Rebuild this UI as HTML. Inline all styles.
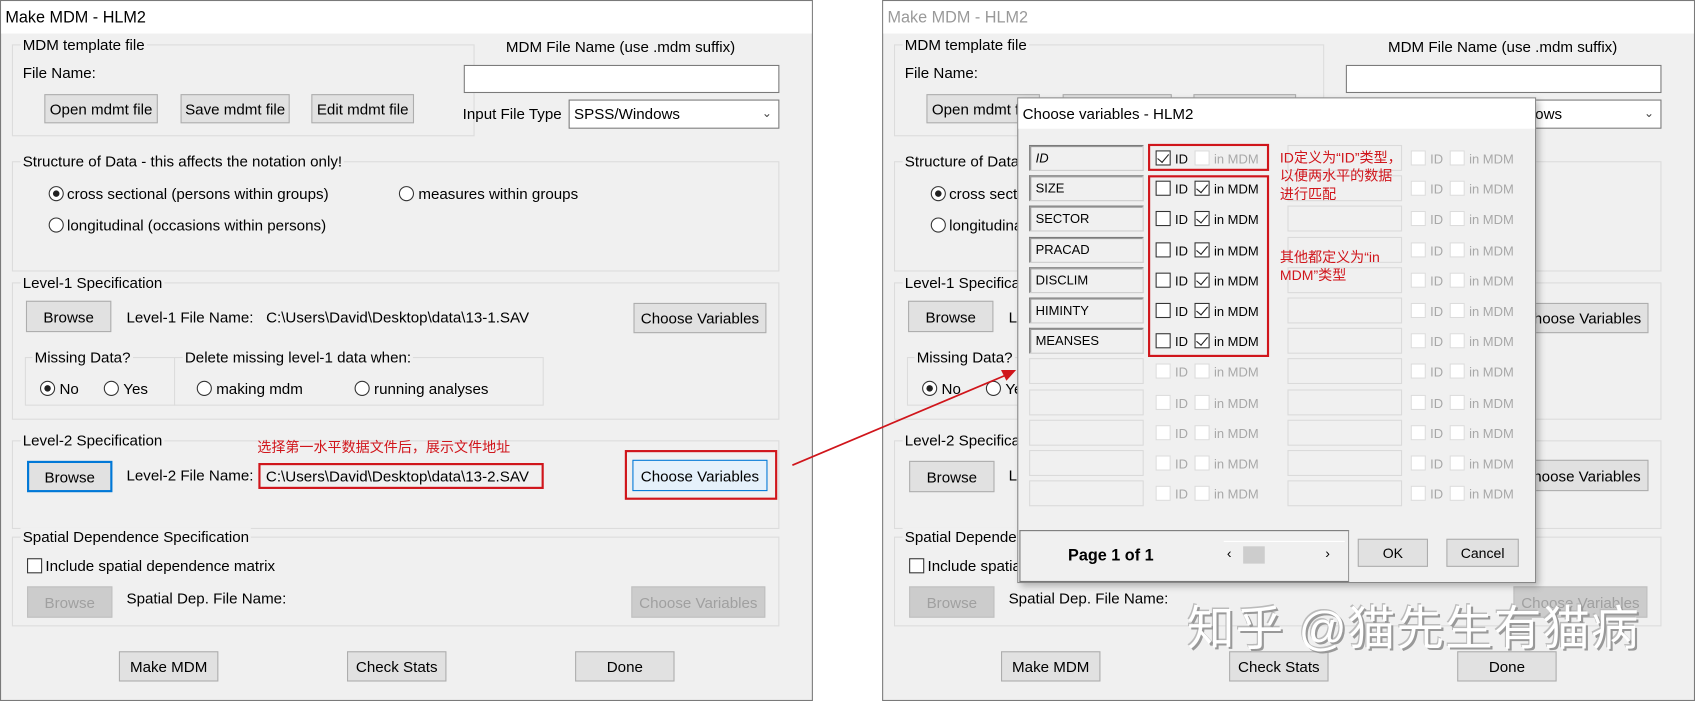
<!DOCTYPE html>
<html><head><meta charset="utf-8"><style>
*{box-sizing:border-box;margin:0;padding:0}
body{width:1695px;height:701px;overflow:hidden;background:#fff;font-family:"Liberation Sans","Noto Sans CJK SC",sans-serif;}
#s{position:absolute;left:0;top:0;width:1568px;height:648px;transform:scale(1.081,1.0818);transform-origin:0 0;}
.w{position:absolute;top:0;width:752px;height:648px;background:#f0f0f0;border:1px solid #7a7a7a;overflow:hidden}
.tb{position:absolute;left:0;top:0;right:0;height:30px;background:#fff}
.tt{position:absolute;left:4px;top:7px;font-size:15px;color:#000;white-space:nowrap}
.a{position:absolute;white-space:nowrap;font-size:14px;line-height:16px;color:#000}
.g{position:absolute;border:1px solid #dcdcdc}
.gl{position:absolute;background:#f0f0f0;padding:0 2px;font-size:14px;line-height:16px;white-space:nowrap}
.b{position:absolute;background:#e1e1e1;border:1px solid #adadad;font-size:14px;display:flex;align-items:center;justify-content:center;white-space:nowrap}
.dis{color:#a0a0a0;background:#cccccc;border-color:#bfbfbf}
.r{position:absolute;width:14px;height:14px;border:1px solid #333;border-radius:50%;background:#fff}
.r.on::after{content:"";position:absolute;left:3px;top:3px;width:6px;height:6px;border-radius:50%;background:#222}
.cb{position:absolute;width:14px;height:14px;border:1px solid #333;background:#fff}
.red{color:#d0151b}
.rb{position:absolute;border:2px solid #d0151b}
.vn{position:absolute;width:106px;height:24px;border:1px solid #7a7a7a;border-right-color:#ccc;border-bottom-color:#ccc;background:#f0f0f0;font-size:12px;line-height:22px;padding-left:5px;box-shadow:inset 1px 1px 0 #999}
.ve{border:1px solid #dadada;box-shadow:none}
.c{position:absolute;width:14px;height:14px;border:1px solid #333;background:#fff}
.cd{border-color:#dcdcdc}
.ck::after{content:"";position:absolute;left:3px;top:0px;width:5px;height:9px;border:solid #222;border-width:0 1.5px 1.5px 0;transform:rotate(40deg)}
.l{position:absolute;font-size:12px;line-height:14px;white-space:nowrap}
.ld{color:#a8a8a8}
</style></head><body><div id="s">

<!-- LEFT WINDOW -->
<div class="w" style="left:0">
<div class="tb"><div class="tt">Make MDM - HLM2</div></div>
<div class="g" style="left:10px;top:40px;width:428px;height:85px"></div><div class="gl" style="left:18px;top:32px">MDM template file</div>
<div class="a" style="left:20px;top:58px">File Name:</div>
<div class="b" style="left:40px;top:86px;width:105px;height:27px">Open mdmt file</div>
<div class="b" style="left:166px;top:86px;width:101px;height:27px">Save mdmt file</div>
<div class="b" style="left:287px;top:86px;width:95px;height:27px">Edit mdmt file</div>
<div class="a" style="left:467px;top:34px">MDM File Name (use .mdm suffix)</div>
<div style="position:absolute;left:428px;top:59px;width:292px;height:26px;background:#fff;border:1px solid #7a7a7a"></div>
<div class="a" style="left:427px;top:96px">Input File Type</div>
<div style="position:absolute;left:525px;top:91px;width:195px;height:27px;background:#fff;border:1px solid #7a7a7a;font-size:14px;line-height:25px;padding-left:4px">SPSS/Windows<span style="position:absolute;right:6px;top:0;font-size:11px;color:#444">&#8964;</span></div>

<div class="g" style="left:10px;top:148px;width:710px;height:102px"></div><div class="gl" style="left:18px;top:140px">Structure of Data - this affects the notation only!</div>
<div class="r on" style="left:44px;top:171px"></div><div class="a" style="left:61px;top:170px">cross sectional (persons within groups)</div>
<div class="r" style="left:368px;top:171px"></div><div class="a" style="left:386px;top:170px">measures within groups</div>
<div class="r" style="left:44px;top:200px"></div><div class="a" style="left:61px;top:199px">longitudinal (occasions within persons)</div>

<div class="g" style="left:10px;top:260px;width:710px;height:127px"></div><div class="gl" style="left:18px;top:252px">Level-1 Specification</div>
<div class="b" style="left:23px;top:277px;width:79px;height:29px">Browse</div>
<div class="a" style="left:116px;top:284px">Level-1 File Name:&nbsp;&nbsp; C:\Users\David\Desktop\data\13-1.SAV</div>
<div class="b" style="left:585px;top:279px;width:123px;height:28px">Choose Variables</div>
<div class="g" style="left:22px;top:329px;width:480px;height:45px"></div>
<div style="position:absolute;left:160px;top:329px;width:1px;height:45px;background:#dcdcdc"></div>
<div class="gl" style="left:29px;top:321px">Missing Data?</div><div class="gl" style="left:168px;top:321px">Delete missing level-1 data when:</div>
<div class="r on" style="left:36px;top:351px"></div><div class="a" style="left:54px;top:350px">No</div>
<div class="r" style="left:95px;top:351px"></div><div class="a" style="left:113px;top:350px">Yes</div>
<div class="r" style="left:181px;top:351px"></div><div class="a" style="left:199px;top:350px">making mdm</div>
<div class="r" style="left:327px;top:351px"></div><div class="a" style="left:345px;top:350px">running analyses</div>

<div class="g" style="left:10px;top:406px;width:710px;height:82px"></div><div class="gl" style="left:18px;top:398px">Level-2 Specification</div>
<div class="a red" style="left:237px;top:405px;font-size:13px">选择第一水平数据文件后，展示文件地址</div>
<div class="b" style="left:24px;top:425px;width:79px;height:29px;border:2px solid #0078d7">Browse</div>
<div class="a" style="left:116px;top:430px">Level-2 File Name:</div>
<div class="rb" style="left:238px;top:427px;width:264px;height:24px"></div>
<div class="a" style="left:245px;top:431px">C:\Users\David\Desktop\data\13-2.SAV</div>
<div class="rb" style="left:577px;top:415px;width:141px;height:46px"></div>
<div class="b" style="left:584px;top:424px;width:125px;height:29px;background:#e5f1fb;border:1px solid #0078d7">Choose Variables</div>

<div class="g" style="left:10px;top:495px;width:710px;height:83px"></div><div class="gl" style="left:18px;top:487px">Spatial Dependence Specification</div>
<div class="cb" style="left:24px;top:515px"></div><div class="a" style="left:41px;top:514px">Include spatial dependence matrix</div>
<div class="b dis" style="left:24px;top:541px;width:79px;height:29px">Browse</div>
<div class="a" style="left:116px;top:544px">Spatial Dep. File Name:</div>
<div class="b dis" style="left:583px;top:541px;width:124px;height:29px">Choose Variables</div>

<div class="b" style="left:109px;top:601px;width:92px;height:28px">Make MDM</div>
<div class="b" style="left:320px;top:601px;width:92px;height:28px">Check Stats</div>
<div class="b" style="left:531px;top:601px;width:92px;height:28px">Done</div>
</div>

<!-- RIGHT WINDOW -->
<div class="w" style="left:816px">
<div class="tb"><div class="tt" style="color:#999">Make MDM - HLM2</div></div>
<div class="g" style="left:10px;top:40px;width:398px;height:85px"></div><div class="gl" style="left:18px;top:32px">MDM template file</div>
<div class="a" style="left:20px;top:58px">File Name:</div>
<div class="b" style="left:40px;top:86px;width:105px;height:27px">Open mdmt file</div>
<div class="b" style="left:166px;top:86px;width:101px;height:27px"></div>
<div class="b" style="left:287px;top:86px;width:95px;height:27px"></div>
<div class="a" style="left:467px;top:34px">MDM File Name (use .mdm suffix)</div>
<div style="position:absolute;left:428px;top:59px;width:292px;height:26px;background:#fff;border:1px solid #7a7a7a"></div>
<div style="position:absolute;left:525px;top:91px;width:195px;height:27px;background:#fff;border:1px solid #7a7a7a;font-size:14px;line-height:25px;padding-left:4px">SPSS/Windows<span style="position:absolute;right:6px;top:0;font-size:11px;color:#444">&#8964;</span></div>
<div class="g" style="left:10px;top:148px;width:710px;height:102px"></div><div class="gl" style="left:18px;top:140px">Structure of Data</div>
<div class="r on" style="left:44px;top:171px"></div><div class="a" style="left:61px;top:170px">cross sectional</div>
<div class="r" style="left:44px;top:200px"></div><div class="a" style="left:61px;top:199px">longitudinal</div>
<div class="g" style="left:10px;top:260px;width:710px;height:127px"></div><div class="gl" style="left:18px;top:252px">Level-1 Specification</div>
<div class="b" style="left:23px;top:277px;width:79px;height:29px">Browse</div>
<div class="a" style="left:116px;top:284px">L</div>
<div class="b" style="left:585px;top:279px;width:123px;height:28px">Choose Variables</div>
<div class="g" style="left:22px;top:329px;width:480px;height:45px"></div>
<div class="gl" style="left:29px;top:321px">Missing Data?</div>
<div class="r on" style="left:36px;top:351px"></div><div class="a" style="left:54px;top:350px">No</div>
<div class="r" style="left:95px;top:351px"></div><div class="a" style="left:113px;top:350px">Yes</div>
<div class="g" style="left:10px;top:406px;width:710px;height:82px"></div><div class="gl" style="left:18px;top:398px">Level-2 Specification</div>
<div class="b" style="left:24px;top:425px;width:79px;height:29px">Browse</div>
<div class="a" style="left:116px;top:430px">L</div>
<div class="b" style="left:584px;top:424px;width:124px;height:29px">Choose Variables</div>
<div class="g" style="left:10px;top:495px;width:710px;height:83px"></div><div class="gl" style="left:18px;top:487px">Spatial Dependence Specification</div>
<div class="cb" style="left:24px;top:515px"></div><div class="a" style="left:41px;top:514px">Include spatial dependence matrix</div>
<div class="b dis" style="left:24px;top:541px;width:79px;height:29px">Browse</div>
<div class="a" style="left:116px;top:544px">Spatial Dep. File Name:</div>
<div class="b dis" style="left:583px;top:541px;width:124px;height:29px">Choose Variables</div>
<div class="b" style="left:109px;top:601px;width:92px;height:28px">Make MDM</div>
<div class="b" style="left:320px;top:601px;width:92px;height:28px">Check Stats</div>
<div class="b" style="left:531px;top:601px;width:92px;height:28px">Done</div>
</div>

<!-- arrow -->
<svg style="position:absolute;left:0;top:0" width="1568" height="648"><line x1="733" y1="430" x2="930" y2="347" stroke="#d0151b" stroke-width="1.6"/><polygon points="940,342 926,342 931,352" fill="#d0151b"/></svg>

<!-- DIALOG -->
<div style="position:absolute;left:941px;top:90px;width:480px;height:449px;background:#f0f0f0;border:1px solid #888;box-shadow:3px 3px 6px rgba(0,0,0,.25)">
<div style="position:absolute;left:0;top:0;right:0;height:28px;background:#fff"></div>
<div class="a" style="left:4px;top:6px;font-size:14px">Choose variables - HLM2</div>
</div>
<div id="rows"></div>
<div style="position:absolute;left:943px;top:490px;width:305px;height:48px;border:1px solid #777;border-right-color:#999;background:#f0f0f0"></div>
<div class="a" style="left:988px;top:506px;font-weight:bold;font-size:15px">Page 1 of 1</div>
<div style="position:absolute;left:1132px;top:500px;width:112px;height:1px;background:#fff"></div>
<div class="a" style="left:1135px;top:504px;font-size:13px">&#8249;</div>
<div style="position:absolute;left:1150px;top:505px;width:20px;height:16px;background:#cdcdcd"></div>
<div class="a" style="left:1226px;top:504px;font-size:13px">&#8250;</div>
<div class="b" style="left:1256px;top:498px;width:65px;height:26px;font-size:13px">OK</div>
<div class="b" style="left:1338px;top:498px;width:67px;height:26px;font-size:13px">Cancel</div>

<div class="rb" style="left:1062px;top:133px;width:112px;height:25px"></div>
<div class="rb" style="left:1062px;top:162px;width:112px;height:168px"></div>
<div class="a red" style="left:1184px;top:137px;font-size:13px;line-height:17px">ID定义为“ID”类型，<br>以便两水平的数据<br>进行匹配</div>
<div class="a red" style="left:1184px;top:229px;font-size:13px;line-height:17px">其他都定义为“in<br>MDM”类型</div>

<div class="a" style="left:1098px;top:557px;font-size:44px;line-height:50px;color:#fff;text-shadow:2px 2px 0 #999,-1px -1px 0 #bbb;letter-spacing:1px">知乎 @猫先生有猫病</div>

</div>
<script>
var names=["ID","SIZE","SECTOR","PRACAD","DISCLIM","HIMINTY","MEANSES","","","","",""];
var h="";
for(var i=0;i<12;i++){
 var y=134+i*28.2, n=names[i], act=n!=="";
 h+='<div class="vn'+(act?'':' ve')+'" style="left:952px;top:'+y+'px'+(i==0?';font-style:italic':'')+'">'+n+'</div>';
 var cy=y+5;
 h+='<div class="c'+(act?'':' cd')+(i==0?' ck':'')+'" style="left:1069px;top:'+cy+'px"></div><div class="l'+(act?'':' ld')+'" style="left:1087px;top:'+(cy+1)+'px">ID</div>';
 h+='<div class="c'+((act&&i>0)?' ck':' cd')+'" style="left:1105px;top:'+cy+'px"></div><div class="l'+((act&&i>0)?'':' ld')+'" style="left:1123px;top:'+(cy+1)+'px">in MDM</div>';
 h+='<div class="vn ve" style="left:1191px;top:'+y+'px"></div>';
 h+='<div class="c cd" style="left:1305px;top:'+cy+'px"></div><div class="l ld" style="left:1323px;top:'+(cy+1)+'px">ID</div>';
 h+='<div class="c cd" style="left:1341px;top:'+cy+'px"></div><div class="l ld" style="left:1359px;top:'+(cy+1)+'px">in MDM</div>';
}
document.getElementById("rows").outerHTML=h;
</script>
</body></html>
